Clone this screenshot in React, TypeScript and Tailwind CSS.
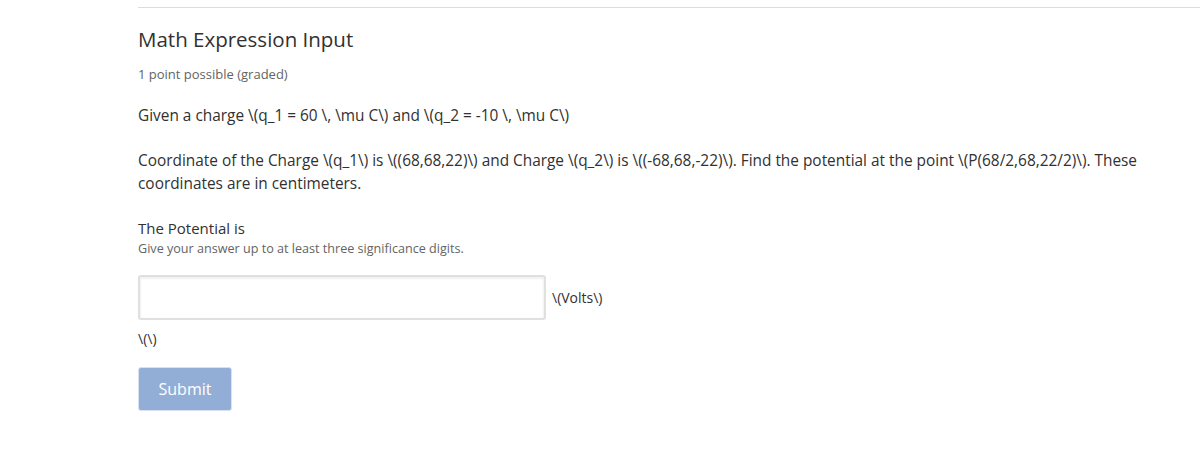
export default function App() {
  return (
    <div className="min-h-[460px] bg-white font-['Open_Sans',sans-serif] text-[#313131]">
      <div className="ml-[138px] pt-[7px]">
        <div className="border-t border-[#dddddd]" />
        <h3 className="mt-[17px] text-[20.5px] leading-[28px] text-[#313131]">Math Expression Input</h3>
        <div className="mt-[13px] text-[13px] leading-[16px] text-[#646464]">1 point possible (graded)</div>
        <p className="mt-[22px] text-[15.4px] leading-[23px]">
          {'Given a charge \\(q_1 = 60 \\, \\mu C\\) and \\(q_2 = -10 \\, \\mu C\\)'}
        </p>
        <p className="mt-[22px] pr-[50px] text-[15.4px] leading-[23px]">
          {'Coordinate of the Charge \\(q_1\\) is \\((68,68,22)\\) and Charge \\(q_2\\) is \\((-68,68,-22)\\). Find the potential at the point \\(P(68/2,68,22/2)\\). These coordinates are in centimeters.'}
        </p>
        <div className="mt-[22px] text-[15px] leading-[23px]">The Potential is</div>
        <div className="mt-[1px] text-[12.6px] leading-[16px] text-[#646464]">Give your answer up to at least three significance digits.</div>
        <div className="mt-[18px] flex items-center gap-[6px]">
          <input
            type="text"
            className="h-[45px] w-[408px] rounded-[3px] border-2 border-[#e0e0e0] bg-white px-[8px] shadow-[inset_0_1px_2px_1px_rgba(0,0,0,0.06)] outline-none"
          />
          <span className="text-[14px]">{'\\(Volts\\)'}</span>
        </div>
        <div className="mt-[8px] text-[14px] leading-[22px]">{'\\(\\)'}</div>
        <button className="mt-[17px] h-[44px] w-[94px] rounded-[3px] border border-[#d7e1ef] bg-[#93aed6] text-[16px] text-white">
          Submit
        </button>
      </div>
    </div>
  );
}
